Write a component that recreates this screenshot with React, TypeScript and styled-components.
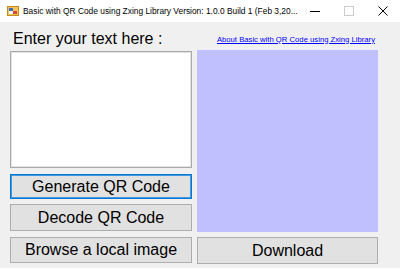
import React from 'react';
import styled, { createGlobalStyle } from 'styled-components';

const GlobalStyle = createGlobalStyle`
  html, body {
    margin: 0;
    padding: 0;
    background: #ffffff;
  }
  body {
    font-family: "Liberation Sans", Arial, sans-serif;
  }
`;

const Window = styled.div`
  width: 400px;
  height: 268px;
  display: flex;
  flex-direction: column;
  background: #f0f0f0;
  overflow: hidden;
`;

const TitleBar = styled.div`
  height: 22px;
  flex: none;
  display: flex;
  align-items: center;
  background: #ffffff;
  padding-left: 7px;
`;

const TitleText = styled.div`
  flex: 1;
  margin-left: 4px;
  font-size: 8.4px;
  color: #000000;
  white-space: nowrap;
  overflow: hidden;
`;

const Controls = styled.div`
  display: flex;
  align-items: center;
  height: 100%;
`;

const ControlButton = styled.div`
  width: 34px;
  height: 100%;
  display: flex;
  align-items: center;
  justify-content: center;
`;

const Client = styled.div`
  flex: 1;
  display: flex;
  gap: 5px;
  padding: 6px 0 0 10px;
`;

const Column = styled.div<{ $width: number }>`
  width: ${(p) => p.$width}px;
  display: flex;
  flex-direction: column;
`;

const Label = styled.div`
  height: 22px;
  line-height: 22px;
  padding-left: 3px;
  font-size: 16px;
  color: #000000;
  white-space: nowrap;
`;

const LinkRow = styled.div`
  height: 22px;
  display: flex;
  align-items: center;
  justify-content: flex-end;
  padding-right: 3px;
`;

const AboutLink = styled.a`
  font-size: 7.7px;
  color: #0000ff;
  text-decoration: underline;
  white-space: nowrap;
  cursor: pointer;
`;

const TextBox = styled.textarea`
  box-sizing: border-box;
  margin: 1px 0 0 0;
  height: 117px;
  width: 100%;
  resize: none;
  border: 1px solid #a9a9a9;
  box-shadow: inset 0 0 0 1px #e3e3e3;
  background: #ffffff;
  outline: none;
  padding: 2px;
`;

const Preview = styled.div`
  height: 182px;
  background: #c0c0ff;
`;

const Button = styled.button<{ $focused?: boolean; $top: number; $height: number }>`
  box-sizing: border-box;
  margin-top: ${(p) => p.$top}px;
  height: ${(p) => p.$height}px;
  width: 100%;
  padding: 0;
  background: #e1e1e1;
  border: 1px solid ${(p) => (p.$focused ? '#0078d7' : '#adadad')};
  box-shadow: ${(p) => (p.$focused ? 'inset 0 0 0 1px #4a98db' : 'none')};
  font-family: "Liberation Sans", Arial, sans-serif;
  font-size: 16px;
  color: #000000;
  line-height: 1;
`;

const AppIcon = () => (
  <svg width="12" height="12" viewBox="0 0 12 12">
    <rect x="0.5" y="1.5" width="11" height="9" fill="#f3c35a" stroke="#c98a1c" />
    <rect x="2" y="3" width="4" height="3" fill="#3b6fc4" />
    <rect x="6" y="6" width="4" height="3" fill="#d9453a" />
    <rect x="2" y="6" width="4" height="3" fill="#ffffff" />
  </svg>
);

export default function App() {
  return (
    <>
      <GlobalStyle />
      <Window>
        <TitleBar>
          <AppIcon />
          <TitleText>Basic with QR Code using Zxing Library Version: 1.0.0 Build 1 (Feb 3,20...</TitleText>
          <Controls>
            <ControlButton>
              <svg width="10" height="10" viewBox="0 0 10 10">
                <line x1="0" y1="5.5" x2="10" y2="5.5" stroke="#000" strokeWidth="1" />
              </svg>
            </ControlButton>
            <ControlButton>
              <svg width="10" height="10" viewBox="0 0 10 10">
                <rect x="0.5" y="0.5" width="9" height="9" fill="none" stroke="#cccccc" />
              </svg>
            </ControlButton>
            <ControlButton>
              <svg width="10" height="10" viewBox="0 0 10 10">
                <path d="M0.5 0.5 L9.5 9.5 M9.5 0.5 L0.5 9.5" stroke="#000" strokeWidth="1" />
              </svg>
            </ControlButton>
          </Controls>
        </TitleBar>
        <Client>
          <Column $width={182}>
            <Label>Enter your text here :</Label>
            <TextBox />
            <Button $focused $top={6} $height={25}>Generate QR Code</Button>
            <Button $top={5} $height={27}>Decode QR Code</Button>
            <Button $top={6} $height={26}>Browse a local image</Button>
          </Column>
          <Column $width={181}>
            <LinkRow>
              <AboutLink>About Basic with QR Code using Zxing Library</AboutLink>
            </LinkRow>
            <Preview />
            <Button $top={5} $height={27}>Download</Button>
          </Column>
        </Client>
      </Window>
    </>
  );
}
